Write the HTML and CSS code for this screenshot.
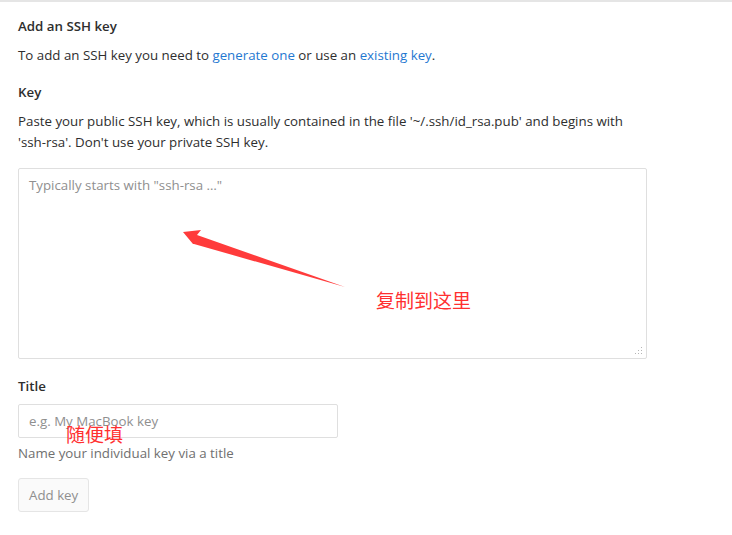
FILE: index.html
```html
<!DOCTYPE html>
<html lang="en">
<head>
  <meta charset="UTF-8" />
  <title>SSH Keys</title>
  <link rel="stylesheet" href="styles.css">
</head>
<body>
  <div class="page">
    <div class="content">
      <h4 class="heading">Add an SSH key</h4>
      <p class="intro">To add an SSH key you need to <a href="#">generate one</a> or use an <a href="#">existing key</a>.</p>

      <div class="form-group">
        <label class="label" for="key">Key</label>
        <p class="help">Paste your public SSH key, which is usually contained in the file '~/.ssh/id_rsa.pub' and begins with <span class="nowrap">'ssh-rsa'</span>. Don't use your private SSH key.</p>
        <textarea id="key" class="form-control key-box" placeholder="Typically starts with &quot;ssh-rsa …&quot;"></textarea>
      </div>

      <div class="form-group">
        <label class="label" for="title">Title</label>
        <input id="title" class="form-control title-box" type="text" placeholder="e.g. My MacBook key">
        <p class="hint">Name your individual key via a title</p>
      </div>

      <button class="btn" disabled>Add key</button>
    </div>

    <!-- annotations drawn over the screenshot -->
    <svg class="arrow" width="180" height="70" viewBox="0 0 180 70">
      <polygon points="2,12 20,10 16,15 164,67 13,24 13,24 12,24" fill="#ff3b3b"/>
    </svg>
    <span class="note note-key">复制到这里</span>
    <span class="note note-title">随便填</span>
  </div>
</body>
</html>
```

FILE: styles.css
```css
body {
  margin: 0;
  font-family: "Open Sans", "Noto Sans", sans-serif;
  font-size: 13.3px;
  color: #2e2e2e;
  background: #fff;
}
.page {
  position: relative;
  width: 732px;
  height: 535px;
}
.content {
  width: 628px;
  padding: 0 86px 0 18px;
  border-top: 2px solid #e5e5e5;
}
.heading {
  margin: 0;
  padding-top: 15px;
  font-size: 13.3px;
  font-weight: 600;
  line-height: 18px;
}
.intro {
  margin: 10px 0 0;
  line-height: 20px;
}
.intro a {
  color: #1f78d1;
  text-decoration: none;
}
.form-group {
  margin-top: 18px;
}
.label {
  display: block;
  font-weight: 600;
  line-height: 18px;
}
.help {
  margin: 10px 0 0;
  line-height: 21px;
}
.nowrap {
  white-space: nowrap;
}
.form-control {
  display: block;
  box-sizing: border-box;
  border: 1px solid #dfdfdf;
  border-radius: 2px;
  font-family: inherit;
  font-size: 13.3px;
  color: #2e2e2e;
  padding: 7px 10px;
}
.form-control::placeholder {
  color: #8f8f8f;
}
.key-box {
  width: 629px;
  height: 191px;
  margin-top: 15px;
  resize: none;
  background:
    radial-gradient(circle, #b5b5b5 0.8px, transparent 1px) right 3px bottom 3px / 3px 3px no-repeat,
    radial-gradient(circle, #b5b5b5 0.8px, transparent 1px) right 6px bottom 3px / 3px 3px no-repeat,
    radial-gradient(circle, #b5b5b5 0.8px, transparent 1px) right 9px bottom 3px / 3px 3px no-repeat,
    radial-gradient(circle, #b5b5b5 0.8px, transparent 1px) right 3px bottom 6px / 3px 3px no-repeat,
    radial-gradient(circle, #b5b5b5 0.8px, transparent 1px) right 6px bottom 6px / 3px 3px no-repeat,
    radial-gradient(circle, #b5b5b5 0.8px, transparent 1px) right 3px bottom 9px / 3px 3px no-repeat,
    #fff;
}
.title-box {
  width: 320px;
  height: 34px;
  margin-top: 9px;
}
.hint {
  margin: 6px 0 0;
  color: #707070;
  line-height: 18px;
}
.btn {
  display: block;
  margin-top: 16px;
  height: 34px;
  padding: 0 10px;
  font-family: inherit;
  font-size: 13.3px;
  color: #8f8f8f;
  background: #fafafa;
  border: 1px solid #e5e5e5;
  border-radius: 3px;
}
.arrow {
  position: absolute;
  left: 181px;
  top: 220px;
}
.note {
  position: absolute;
  font-family: "Noto Sans CJK SC", sans-serif;
  font-size: 19px;
  color: #ff3030;
  line-height: 18px;
}
.note-key {
  left: 376px;
  top: 291px;
}
.note-title {
  left: 66px;
  top: 425px;
}
```
